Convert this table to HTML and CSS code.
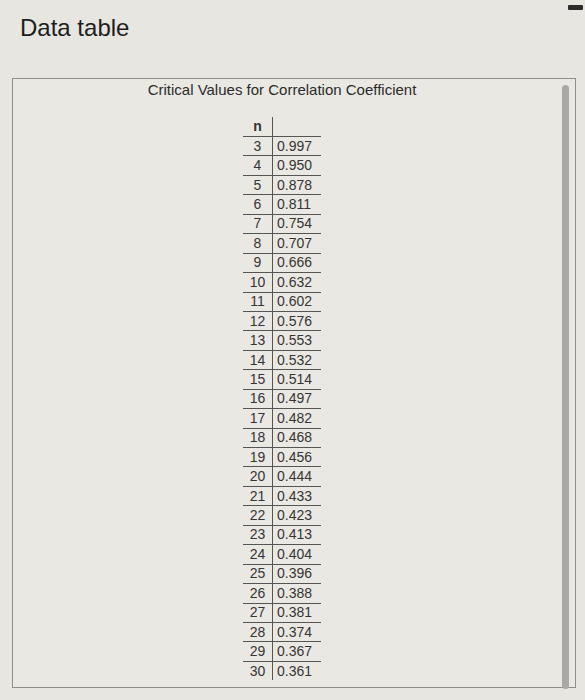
FILE: index.html
```html
<!DOCTYPE html>
<html>
<head>
<meta charset="utf-8">
<link rel="stylesheet" href="styles.css">
</head>
<body>
<div class="page">
  <div class="minimize"></div>
  <h1 class="title">Data table</h1>
  <div class="box">
    <div class="content">
      <div class="caption">Critical Values for Correlation Coefficient</div>
      <table class="crit">
        <thead><tr><th class="n">n</th><th class="v"></th></tr></thead>
        <tbody>
          <tr><td class="n">3</td><td class="v">0.997</td></tr>
          <tr><td class="n">4</td><td class="v">0.950</td></tr>
          <tr><td class="n">5</td><td class="v">0.878</td></tr>
          <tr><td class="n">6</td><td class="v">0.811</td></tr>
          <tr><td class="n">7</td><td class="v">0.754</td></tr>
          <tr><td class="n">8</td><td class="v">0.707</td></tr>
          <tr><td class="n">9</td><td class="v">0.666</td></tr>
          <tr><td class="n">10</td><td class="v">0.632</td></tr>
          <tr><td class="n">11</td><td class="v">0.602</td></tr>
          <tr><td class="n">12</td><td class="v">0.576</td></tr>
          <tr><td class="n">13</td><td class="v">0.553</td></tr>
          <tr><td class="n">14</td><td class="v">0.532</td></tr>
          <tr><td class="n">15</td><td class="v">0.514</td></tr>
          <tr><td class="n">16</td><td class="v">0.497</td></tr>
          <tr><td class="n">17</td><td class="v">0.482</td></tr>
          <tr><td class="n">18</td><td class="v">0.468</td></tr>
          <tr><td class="n">19</td><td class="v">0.456</td></tr>
          <tr><td class="n">20</td><td class="v">0.444</td></tr>
          <tr><td class="n">21</td><td class="v">0.433</td></tr>
          <tr><td class="n">22</td><td class="v">0.423</td></tr>
          <tr><td class="n">23</td><td class="v">0.413</td></tr>
          <tr><td class="n">24</td><td class="v">0.404</td></tr>
          <tr><td class="n">25</td><td class="v">0.396</td></tr>
          <tr><td class="n">26</td><td class="v">0.388</td></tr>
          <tr><td class="n">27</td><td class="v">0.381</td></tr>
          <tr><td class="n">28</td><td class="v">0.374</td></tr>
          <tr><td class="n">29</td><td class="v">0.367</td></tr>
          <tr><td class="n">30</td><td class="v">0.361</td></tr>
        </tbody>
      </table>
    </div>
    <div class="scroll"><div class="thumb"></div></div>
  </div>
</div>
</body>
</html>
```

FILE: styles.css
```css
html, body {
  margin: 0;
  padding: 0;
  background: #e8e6e1;
}
body {
  font-family: "Liberation Sans", Arial, sans-serif;
  color: #2a2a2a;
  width: 585px;
  height: 700px;
  overflow: hidden;
}
.page {
  position: relative;
  padding: 14px 0 0 12px;
}
.minimize {
  position: absolute;
  top: 5px;
  left: 568px;
  width: 15px;
  height: 5px;
  background: #2c2c2c;
  border-radius: 1px;
}
.title {
  margin: 0 0 0 8px;
  font-size: 24px;
  font-weight: normal;
  line-height: 28px;
  color: #1e1e1e;
}
.box {
  margin-top: 36px;
  width: 564px;
  height: 610px;
  border: 1px solid #8f8e8a;
  background: #eae8e3;
  display: flex;
  box-sizing: border-box;
}
.content {
  width: 538px;
  display: flex;
  flex-direction: column;
  align-items: center;
  padding-top: 2px;
}
.caption {
  font-size: 15px;
  line-height: 18px;
  color: #2b2b2b;
}
.crit {
  margin-top: 18px;
  border-collapse: collapse;
  font-size: 14px;
  color: #353535;
}
.crit th, .crit td {
  padding: 0;
  height: 18.45px;
  line-height: 15px;
  vertical-align: middle;
}
.crit th {
  font-weight: bold;
  height: 19px;
  border-bottom: 1px solid #555;
  color: #333;
}
.crit td {
  border-bottom: 1px solid #555;
}
.crit tr:last-child td {
  border-bottom: none;
}
.crit .n {
  width: 29px;
  text-align: center;
  border-right: 1px solid #555;
}
.crit .v {
  width: 44px;
  padding-left: 4px;
  text-align: left;
}
.scroll {
  flex: 1;
  display: flex;
  justify-content: center;
  padding: 6px 0 0 4px;
}
.thumb {
  width: 7px;
  height: 604px;
  background: #a9a8a5;
  border-radius: 4px;
}
```
